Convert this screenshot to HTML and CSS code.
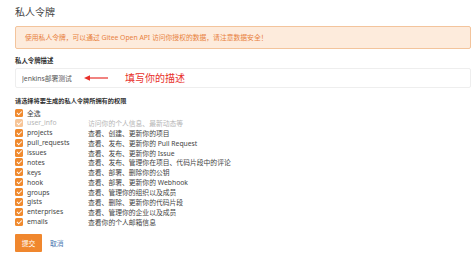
FILE: index.html
```html
<!DOCTYPE html>
<html lang="zh-CN">
<head>
    <meta charset="UTF-8">
    <title>私人令牌</title>
    <link rel="stylesheet" href="styles.css">
</head>
<body>

<div class="token-page">
    <h3 class="titulo">私人令牌</h3>

    <div class="aviso">使用私人令牌，可以通过 Gitee Open API 访问你授权的数据，请注意数据安全！</div>

    <label class="rotulo" for="descricao">私人令牌描述</label>
    <div class="campo-wrap">
        <input type="text" id="descricao" class="campo" value="Jenkins部署测试">
        <!-- anotação em cima do print -->
        <div class="anotacao">
            <svg width="25" height="6" viewBox="0 0 25 6"><line x1="3" y1="3" x2="24" y2="3" stroke="#e8302a" stroke-width="1.2"/><polygon points="0,3 6,0.3 6,5.7" fill="#e8302a"/></svg>
            <span>填写你的描述</span>
        </div>
    </div>

    <div class="rotulo rotulo-perm">请选择将要生成的私人令牌所拥有的权限</div>

    <ul class="permissoes">
        <li><span class="check"></span><span class="nome">全选</span></li>
        <li class="desabilitado"><span class="check"></span><span class="nome">user_info</span><span class="desc">访问你的个人信息、最新动态等</span></li>
        <li><span class="check"></span><span class="nome">projects</span><span class="desc">查看、创建、更新你的项目</span></li>
        <li><span class="check"></span><span class="nome">pull_requests</span><span class="desc">查看、发布、更新你的 Pull Request</span></li>
        <li><span class="check"></span><span class="nome">issues</span><span class="desc">查看、发布、更新你的 Issue</span></li>
        <li><span class="check"></span><span class="nome">notes</span><span class="desc">查看、发布、管理你在项目、代码片段中的评论</span></li>
        <li><span class="check"></span><span class="nome">keys</span><span class="desc">查看、部署、删除你的公钥</span></li>
        <li><span class="check"></span><span class="nome">hook</span><span class="desc">查看、部署、更新你的 Webhook</span></li>
        <li><span class="check"></span><span class="nome">groups</span><span class="desc">查看、管理你的组织以及成员</span></li>
        <li><span class="check"></span><span class="nome">gists</span><span class="desc">查看、删除、更新你的代码片段</span></li>
        <li><span class="check"></span><span class="nome">enterprises</span><span class="desc">查看、管理你的企业以及成员</span></li>
        <li><span class="check"></span><span class="nome">emails</span><span class="desc">查看你的个人邮箱信息</span></li>
    </ul>

    <div class="acoes">
        <button class="btn-enviar">提交</button>
        <a class="link-cancelar" href="#">取消</a>
    </div>
</div>

</body>
</html>
```

FILE: styles.css
```css
body { margin: 0; background: #fff; color: #333; font-family: "Noto Sans", "Noto Sans CJK SC", sans-serif; }
.token-page { padding: 5px 3px 0 15px; }
.titulo { margin: 0 0 7px; font-size: 10px; line-height: 14px; font-weight: normal; color: #444; }
.aviso { border: 1px solid #f3c49c; background: #fdebdc; border-radius: 2px; color: #e8813c; font-size: 6.8px; line-height: 21px; padding: 0 9px; }
.rotulo { display: block; margin-top: 7px; font-size: 6.4px; line-height: 10px; font-weight: bold; color: #333; }
.campo-wrap { position: relative; margin-top: 2px; }
.campo { display: block; width: 100%; height: 20px; box-sizing: border-box; border: 1px solid #eee; border-radius: 2px; padding: 0 6px; font-family: inherit; font-size: 6.8px; color: #555; background: #fff; }
.anotacao { position: absolute; left: 69px; top: 3px; display: flex; align-items: center; gap: 16px; color: #e8302a; font-size: 10px; line-height: 14px; }
.rotulo-perm { margin-top: 8px; font-size: 6.2px; }
.permissoes { list-style: none; margin: 2px 0 0; padding: 0; }
.permissoes li { display: flex; align-items: center; height: 9.9px; font-size: 6.8px; color: #444; }
.check { width: 8px; height: 8px; border-radius: 1.5px; background: #f08a2e; position: relative; flex-shrink: 0; margin-right: 4px; }
.check::after { content: ""; position: absolute; left: 2.7px; top: 0.9px; width: 1.8px; height: 3.8px; border: solid #fff; border-width: 0 1.2px 1.2px 0; transform: rotate(45deg); }
.nome { width: 61px; flex-shrink: 0; }
.desabilitado { color: #b5b5b5 !important; }
.desabilitado .check { background: #f7c597; }
.acoes { display: flex; align-items: center; gap: 8px; margin-top: 7px; }
.btn-enviar { width: 27px; height: 18px; padding: 0; border: none; border-radius: 1px; background: #f0872e; color: #fff; font-family: inherit; font-size: 6.8px; }
.link-cancelar { color: #4a78b0; text-decoration: none; font-size: 6.8px; }
```
